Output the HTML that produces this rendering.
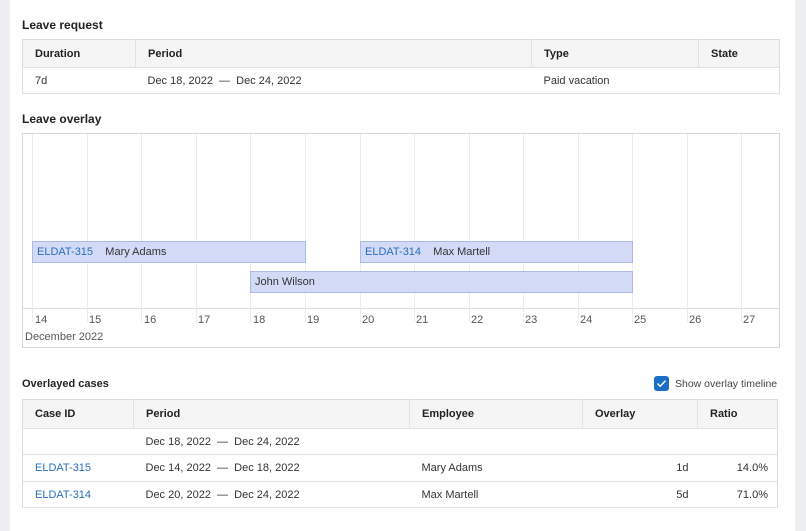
<!DOCTYPE html><html><head><style>
body{margin:0;width:806px;height:531px;background:#eceef2;font-family:"Liberation Sans",sans-serif;font-size:11px;color:#333;position:relative;overflow:hidden}
.panel{position:absolute;left:10px;top:0;width:785px;height:531px;background:#fff}
.a{position:absolute}
.h{font-weight:bold;font-size:12px;color:#222}
table{position:absolute;border-collapse:collapse;font-size:11px;table-layout:fixed}
td,th{border-bottom:1px solid #e2e2e2;padding:0 12px;text-align:left;white-space:nowrap}
th{background:#f5f5f5;font-weight:bold;color:#222;border-right:1px solid #e2e2e2}
th:last-child{border-right:none}
.t{border:1px solid #dcdcdc}
.ln{color:#2a6ebb}
.r{text-align:right;padding-right:9px}
.vl{position:absolute;top:134px;width:1px;height:188px;background:#ececec}
.bar{position:absolute;height:22px;background:#d3daf6;border:1px solid #aeb9ea;box-sizing:border-box;line-height:21px;padding-left:4px;white-space:nowrap}
.d{position:absolute;top:314px;color:#555}
</style></head><body>
<div class="panel"></div>
<div class="a h" style="left:22px;top:18px">Leave request</div>
<table class="t" style="left:22px;top:39px;width:758px">
<colgroup><col style="width:113px"><col style="width:396px"><col style="width:167px"><col></colgroup>
<tr style="height:28px"><th>Duration</th><th>Period</th><th>Type</th><th>State</th></tr>
<tr style="height:26px"><td>7d</td><td>Dec 18, 2022 &nbsp;—&nbsp; Dec 24, 2022</td><td>Paid vacation</td><td></td></tr>
</table>
<div class="a h" style="left:22px;top:112px">Leave overlay</div>
<div class="a" style="left:22px;top:133px;width:756px;height:213px;border:1px solid #d6d6d6"></div>
<div class="a" style="left:23px;top:308px;width:756px;height:1px;background:#dcdcdc"></div>
<div class="vl" style="left:32px"></div><div class="vl" style="left:87px"></div><div class="vl" style="left:141px"></div><div class="vl" style="left:196px"></div><div class="vl" style="left:250px"></div><div class="vl" style="left:305px"></div><div class="vl" style="left:360px"></div><div class="vl" style="left:414px"></div><div class="vl" style="left:469px"></div><div class="vl" style="left:523px"></div><div class="vl" style="left:578px"></div><div class="vl" style="left:632px"></div><div class="vl" style="left:687px"></div><div class="vl" style="left:741px"></div>
<div class="bar" style="left:32px;top:241px;width:274px"><span class="ln">ELDAT-315</span>&nbsp;&nbsp;&nbsp; Mary Adams</div>
<div class="bar" style="left:360px;top:241px;width:273px"><span class="ln">ELDAT-314</span>&nbsp;&nbsp;&nbsp; Max Martell</div>
<div class="bar" style="left:250px;top:271px;width:383px">John Wilson</div>
<div class="d" style="left:35px">14</div><div class="d" style="left:89px">15</div><div class="d" style="left:144px">16</div><div class="d" style="left:198px">17</div><div class="d" style="left:253px">18</div><div class="d" style="left:307px">19</div><div class="d" style="left:362px">20</div><div class="d" style="left:416px">21</div><div class="d" style="left:471px">22</div><div class="d" style="left:525px">23</div><div class="d" style="left:580px">24</div><div class="d" style="left:634px">25</div><div class="d" style="left:689px">26</div><div class="d" style="left:743px">27</div>
<div class="a" style="left:25px;top:331px;color:#555">December 2022</div>
<div class="a h" style="left:22px;top:378px;font-size:11px">Overlayed cases</div>
<div class="a" style="left:654px;top:376px;width:15px;height:15px;background:#1a6fc4;border-radius:3px"><svg width="15" height="15"><path d="M3.5 7.5l2.7 2.7 5.3-5.6" stroke="#fff" stroke-width="1.4" fill="none"/></svg></div>
<div class="a" style="left:675px;top:378px;color:#444;font-size:10.5px">Show overlay timeline</div>
<table class="t" style="left:22px;top:399px;width:756px">
<colgroup><col style="width:111px"><col style="width:276px"><col style="width:173px"><col style="width:115px"><col></colgroup>
<tr style="height:29px"><th>Case ID</th><th>Period</th><th>Employee</th><th>Overlay</th><th>Ratio</th></tr>
<tr style="height:26px"><td></td><td>Dec 18, 2022 &nbsp;—&nbsp; Dec 24, 2022</td><td></td><td></td><td></td></tr>
<tr style="height:27px"><td class="ln">ELDAT-315</td><td>Dec 14, 2022 &nbsp;—&nbsp; Dec 18, 2022</td><td>Mary Adams</td><td class="r">1d</td><td class="r">14.0%</td></tr>
<tr style="height:26px"><td class="ln">ELDAT-314</td><td>Dec 20, 2022 &nbsp;—&nbsp; Dec 24, 2022</td><td>Max Martell</td><td class="r">5d</td><td class="r">71.0%</td></tr>
</table>
</body></html>
